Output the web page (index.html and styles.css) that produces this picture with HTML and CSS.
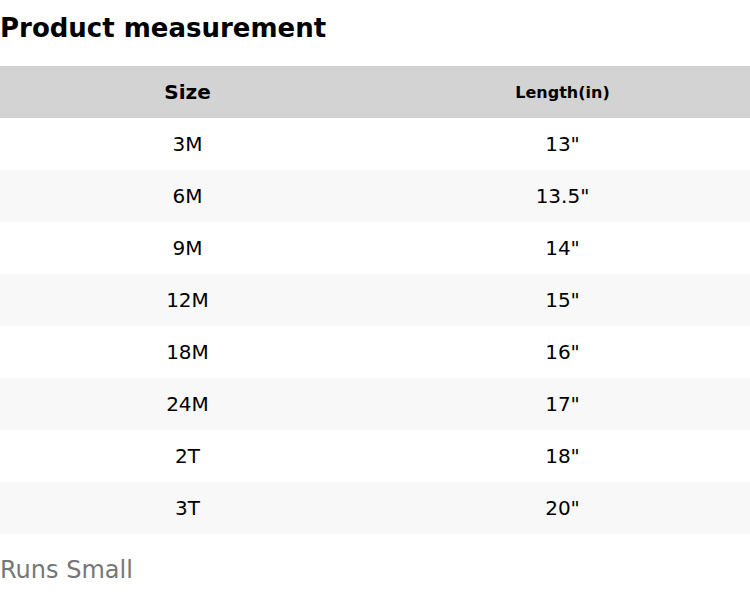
FILE: index.html
```html
<!DOCTYPE html>
<html lang="en">
<head>
<meta charset="utf-8">
<title>Product measurement</title>
<link rel="stylesheet" href="styles.css">
</head>
<body>
<h1 class="title">Product measurement</h1>
<table class="size-table">
  <thead>
    <tr><th class="th-size">Size</th><th class="th-length">Length(in)</th></tr>
  </thead>
  <tbody>
    <tr><td>3M</td><td>13"</td></tr>
    <tr><td>6M</td><td>13.5"</td></tr>
    <tr><td>9M</td><td>14"</td></tr>
    <tr><td>12M</td><td>15"</td></tr>
    <tr><td>18M</td><td>16"</td></tr>
    <tr><td>24M</td><td>17"</td></tr>
    <tr><td>2T</td><td>18"</td></tr>
    <tr><td>3T</td><td>20"</td></tr>
  </tbody>
</table>
<p class="note">Runs Small</p>
</body>
</html>
```
FILE: styles.css
```css
html, body {
  margin: 0;
  padding: 0;
  background: #fff;
  font-family: "DejaVu Sans", sans-serif;
  color: #000;
}
.title {
  font-size: 26px;
  font-weight: bold;
  line-height: 30px;
  margin: 13px 0 23px;
}
.size-table {
  width: 750px;
  border-collapse: collapse;
  table-layout: fixed;
}
.size-table th,
.size-table td {
  height: 52px;
  padding: 0;
  text-align: center;
  vertical-align: middle;
}
.size-table thead tr {
  background: #d3d3d3;
}
.th-size {
  font-size: 20px;
}
.th-length {
  font-size: 16px;
}
.size-table td {
  font-size: 20px;
}
.size-table tbody tr:nth-child(even) {
  background: #f8f8f8;
}
.note {
  font-size: 24px;
  line-height: 28px;
  color: #777;
  margin: 22px 0 0;
}
```
